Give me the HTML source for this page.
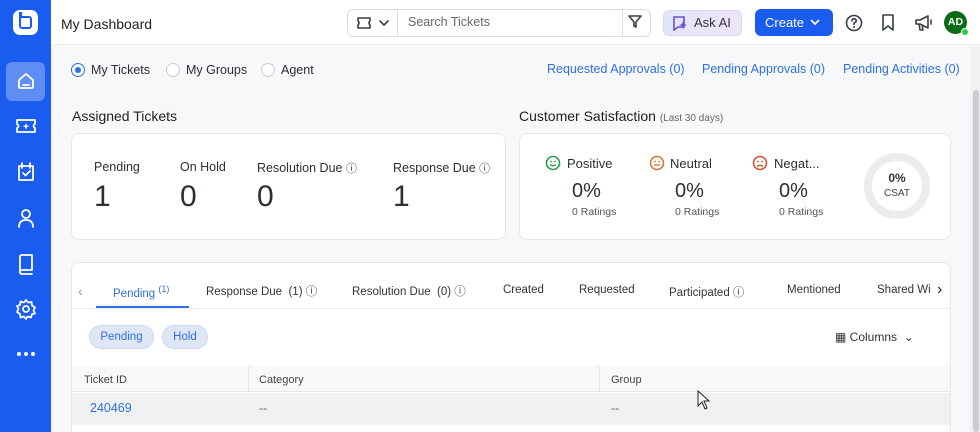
<!DOCTYPE html>
<html><head><meta charset="utf-8">
<style>
*{box-sizing:border-box;margin:0;padding:0}
html,body{width:980px;height:432px;overflow:hidden}
body{font-family:"Liberation Sans",sans-serif;background:#f7f8fa;position:relative;color:#2b2f36}
.a{position:absolute}
.side{left:0;top:0;width:51px;height:432px;background:#1a5cf0}
.hdr{left:0;top:0;width:980px;height:45px;background:#fff;border-bottom:1px solid #eceef2}
.card{background:#fff;border:1px solid #e6e8ec;border-radius:8px}
.blue{color:#2f6fe0}
svg{display:block}
.ic{stroke:#fff;fill:none;stroke-width:1.8;stroke-linecap:round;stroke-linejoin:round}
.g{stroke:#3a3f47;fill:none;stroke-width:1.6;stroke-linecap:round;stroke-linejoin:round}
</style></head><body>
<div class="a hdr">
  <div class="a" style="left:61px;top:16px;font-size:14px;color:#222">My Dashboard</div>
  <div class="a" style="left:347px;top:9px;width:304px;height:28px;border:1px solid #d9dce2;border-radius:6px;background:#fff"></div>
  <div class="a" style="left:397px;top:9px;width:1px;height:28px;background:#d9dce2"></div>
  <div class="a" style="left:622px;top:9px;width:1px;height:28px;background:#d9dce2"></div>
  <svg class="a" style="left:357px;top:16px" width="34" height="14"><path class="g" d="M1 2 H13 V5 Q11 7 13 9 V12 H1 V9 Q3 7 1 5Z M23 5 L27 9 L31 5"/></svg>
  <div class="a" style="left:408px;top:15px;font-size:12.5px;color:#666">Search Tickets</div>
  <svg class="a" style="left:627px;top:14px" width="16" height="16"><path class="g" d="M2 2 H14 L9 8 V13 L7 12 V8Z"/></svg>
  <div class="a" style="left:663px;top:10px;width:79px;height:26px;border-radius:6px;background:linear-gradient(90deg,#e2e6fb,#efe4fa);border:1px solid #d7d9f3"></div>
  <svg class="a" style="left:671px;top:15px" width="18" height="16"><path d="M3 2 H13 V12 H7 L3 15Z" stroke="#6a4fd8" stroke-width="1.6" fill="none"/><path d="M12 6 L13 9 L16 10 L13 11 L12 14 L11 11 L8 10 L11 9Z" fill="#6a4fd8"/></svg>
  <div class="a" style="left:694px;top:15px;font-size:13px;color:#333">Ask AI</div>
  <div class="a" style="left:755px;top:9px;width:78px;height:27px;border-radius:6px;background:#1a5cf0"></div>
  <div class="a" style="left:765px;top:15px;font-size:13px;color:#fff">Create</div>
  <svg class="a" style="left:809px;top:17px" width="12" height="10"><path d="M2 3 L6 7 L10 3" stroke="#fff" stroke-width="1.7" fill="none"/></svg>
  <svg class="a" style="left:845px;top:14px" width="18" height="18"><circle class="g" cx="9" cy="9" r="7.5"/><path class="g" d="M6.8 7 Q7 4.8 9 4.8 Q11.2 4.8 11.2 6.8 Q11.2 8.3 9 9 V10.5"/><circle cx="9" cy="13" r="1" fill="#3a3f47"/></svg>
  <svg class="a" style="left:880px;top:13px" width="16" height="19"><path class="g" d="M3 2 H13 V17 L8 13 L3 17Z"/></svg>
  <svg class="a" style="left:914px;top:13px" width="20" height="19"><path class="g" d="M2 7 H6 L14 3 V15 L6 11 H2Z M5 11 L6 17 H9 L8 12 M17 7 V11"/></svg>
  <div class="a" style="left:944px;top:11px;width:23px;height:23px;border-radius:50%;background:#0c6b16;color:#fff;font-size:10.5px;font-weight:bold;text-align:center;line-height:23px">AD</div>
  <div class="a" style="left:961px;top:28px;width:8px;height:8px;border-radius:50%;background:#2ecc40;border:1px solid #fff"></div>
</div>
<div class="a side">
  <div class="a" style="left:13px;top:10px;width:25px;height:25px;border-radius:7px;background:#fff"></div>
  <div class="a" style="left:19px;top:16px;width:13px;height:13px;border:2.5px solid #1a5cf0;border-radius:3px"></div>
  <div class="a" style="left:19px;top:12px;width:2.5px;height:6px;background:#1a5cf0"></div>
  <div class="a" style="left:6px;top:62px;width:39px;height:39px;border-radius:6px;background:#5e8ef3"></div>
  <svg class="a" style="left:16px;top:71px" width="20" height="20"><path class="ic" d="M3 9 L10 3 L17 9 V16 Q17 17 16 17 H4 Q3 17 3 16Z M7 14 H13"/></svg>
  <svg class="a" style="left:15px;top:117px" width="22" height="18"><path class="ic" d="M2 3 H20 V7 Q17 9 20 11 V15 H2 V11 Q5 9 2 7Z"/><path d="M11 6 L12 8.5 L14.5 9 L12 10 L11 12.5 L10 10 L7.5 9 L10 8.5Z" fill="#fff"/></svg>
  <svg class="a" style="left:16px;top:161px" width="20" height="22"><path class="ic" d="M3 5 H17 V19 H3Z M6 2 V7 M14 2 V7 M7 12 L9.5 14.5 L14 10"/></svg>
  <svg class="a" style="left:16px;top:207px" width="20" height="22"><circle class="ic" cx="10" cy="7" r="4"/><path class="ic" d="M3 20 Q3 13 10 13 Q17 13 17 20"/></svg>
  <svg class="a" style="left:16px;top:253px" width="20" height="22"><path class="ic" d="M4 4 Q4 2 6 2 H16 V17 H6 Q4 17 4 19 Z M4 19 Q4 21 6 21 H16"/></svg>
  <svg class="a" style="left:15px;top:298px" width="22" height="22"><circle class="ic" cx="11" cy="11" r="3"/><path class="ic" d="M11 2 L13 4.5 L16.5 4 L17 7.5 L20 9.5 L18.5 12.5 L20 15.5 L17 16 L16 19.5 L12.5 18.5 L11 21 L9 18.5 L5.5 19.5 L5 16 L2 14 L3.5 11 L2 8 L5 7 L5.5 3.5 L9 4.5Z"/></svg>
  <div class="a" style="left:17px;top:352px;width:4px;height:4px;border-radius:50%;background:#fff"></div>
  <div class="a" style="left:24px;top:352px;width:4px;height:4px;border-radius:50%;background:#fff"></div>
  <div class="a" style="left:31px;top:352px;width:4px;height:4px;border-radius:50%;background:#fff"></div>
</div>
<!-- scrollbar -->
<div class="a" style="left:970px;top:46px;width:10px;height:386px;background:#f0f1f3"></div>
<div class="a" style="left:973px;top:90px;width:6px;height:342px;background:#c9ccd2;border-radius:3px"></div>
<!-- radios -->
<div class="a" style="left:71px;top:63px;width:14px;height:14px;border:1.5px solid #2f6fe0;border-radius:50%"></div>
<div class="a" style="left:75px;top:67px;width:6px;height:6px;background:#2f6fe0;border-radius:50%"></div>
<div class="a" style="left:91px;top:63px;font-size:12.5px">My Tickets</div>
<div class="a" style="left:166px;top:63px;width:14px;height:14px;border:1px solid #c8ccd3;border-radius:50%;background:#fff"></div>
<div class="a" style="left:186px;top:63px;font-size:12.5px">My Groups</div>
<div class="a" style="left:261px;top:63px;width:14px;height:14px;border:1px solid #c8ccd3;border-radius:50%;background:#fff"></div>
<div class="a" style="left:281px;top:63px;font-size:12.5px">Agent</div>
<div class="a blue" style="left:547px;top:62px;font-size:12.5px">Requested Approvals (0)</div>
<div class="a blue" style="left:702px;top:62px;font-size:12.5px">Pending Approvals (0)</div>
<div class="a blue" style="left:843px;top:62px;font-size:12.5px">Pending Activities (0)</div>
<!-- assigned -->
<div class="a" style="left:72px;top:108px;font-size:14px;color:#222">Assigned Tickets</div>
<div class="a card" style="left:71px;top:133px;width:435px;height:107px"></div>
<div class="a" style="left:94px;top:160px;font-size:12.5px">Pending</div>
<div class="a" style="left:94px;top:180px;font-size:30px">1</div>
<div class="a" style="left:180px;top:160px;font-size:12.5px">On Hold</div>
<div class="a" style="left:180px;top:180px;font-size:30px">0</div>
<div class="a" style="left:257px;top:160px;font-size:12.5px">Resolution Due <span style="font-size:11px">ⓘ</span></div>
<div class="a" style="left:257px;top:180px;font-size:30px">0</div>
<div class="a" style="left:393px;top:160px;font-size:12.5px">Response Due <span style="font-size:11px">ⓘ</span></div>
<div class="a" style="left:393px;top:180px;font-size:30px">1</div>
<!-- csat -->
<div class="a" style="left:519px;top:108px;font-size:14px;color:#222">Customer Satisfaction <span style="font-size:10px;color:#666">(Last 30 days)</span></div>
<div class="a card" style="left:519px;top:133px;width:432px;height:107px"></div>
<svg class="a" style="left:545px;top:155px" width="16" height="16"><circle cx="8" cy="8" r="6.5" stroke="#2e9a4e" stroke-width="1.6" fill="none"/><path d="M5 9.5 Q8 12 11 9.5" stroke="#2e9a4e" stroke-width="1.4" fill="none"/><circle cx="6" cy="6.5" r="0.9" fill="#2e9a4e"/><circle cx="10" cy="6.5" r="0.9" fill="#2e9a4e"/></svg>
<div class="a" style="left:567px;top:156px;font-size:13px">Positive</div>
<div class="a" style="left:572px;top:180px;font-size:20px">0%</div>
<div class="a" style="left:572px;top:206px;font-size:10.5px;color:#555">0 Ratings</div>
<svg class="a" style="left:649px;top:155px" width="16" height="16"><circle cx="8" cy="8" r="6.5" stroke="#d07a35" stroke-width="1.6" fill="none"/><path d="M5 10 H11" stroke="#d07a35" stroke-width="1.4"/><circle cx="6" cy="6.5" r="0.9" fill="#d07a35"/><circle cx="10" cy="6.5" r="0.9" fill="#d07a35"/></svg>
<div class="a" style="left:670px;top:156px;font-size:13px">Neutral</div>
<div class="a" style="left:675px;top:180px;font-size:20px">0%</div>
<div class="a" style="left:675px;top:206px;font-size:10.5px;color:#555">0 Ratings</div>
<svg class="a" style="left:752px;top:155px" width="16" height="16"><circle cx="8" cy="8" r="6.5" stroke="#c6533a" stroke-width="1.6" fill="none"/><path d="M5 11.5 Q8 9 11 11.5" stroke="#c6533a" stroke-width="1.4" fill="none"/><circle cx="6" cy="6.5" r="0.9" fill="#c6533a"/><circle cx="10" cy="6.5" r="0.9" fill="#c6533a"/></svg>
<div class="a" style="left:774px;top:156px;font-size:13px">Negat...</div>
<div class="a" style="left:779px;top:180px;font-size:20px">0%</div>
<div class="a" style="left:779px;top:206px;font-size:10.5px;color:#555">0 Ratings</div>
<div class="a" style="left:864px;top:153px;width:66px;height:66px;border:8px solid #ebecee;border-radius:50%"></div>
<div class="a" style="left:864px;top:171px;width:66px;text-align:center;font-size:12px;font-weight:bold">0%</div>
<div class="a" style="left:864px;top:188px;width:66px;text-align:center;font-size:10px;color:#444">CSAT</div>
<!-- tabs card -->
<div class="a card" style="left:71px;top:262px;width:880px;height:180px;border-radius:8px 8px 0 0"></div>
<div class="a" style="left:72px;top:308px;width:878px;height:1px;background:#eceef2"></div>
<div class="a" style="left:78px;top:283px;font-size:14px;color:#999">‹</div>
<div class="a blue" style="left:113px;top:284px;font-size:11.5px">Pending <sup style="font-size:9px">(1)</sup></div>
<div class="a" style="left:96px;top:306px;width:93px;height:2px;background:#2f6fe0"></div>
<div class="a" style="left:206px;top:283px;font-size:11.5px;color:#333">Response Due &nbsp;(1) ⓘ</div>
<div class="a" style="left:352px;top:283px;font-size:11.5px;color:#333">Resolution Due &nbsp;(0) ⓘ</div>
<div class="a" style="left:503px;top:284px;font-size:11.5px;color:#333">Created</div>
<div class="a" style="left:579px;top:284px;font-size:11.5px;color:#333">Requested</div>
<div class="a" style="left:669px;top:284px;font-size:11.5px;color:#333">Participated ⓘ</div>
<div class="a" style="left:787px;top:284px;font-size:11.5px;color:#333">Mentioned</div>
<div class="a" style="left:877px;top:284px;font-size:11.5px;color:#333;width:53px;overflow:hidden;white-space:nowrap">Shared With</div>
<div class="a" style="left:937px;top:281px;font-size:16px;color:#222">›</div>
<div class="a" style="left:89px;top:325px;width:65px;height:24px;border-radius:12px;background:#dfe7f7;border:1px solid #cdd7ee;color:#2f6fe0;font-size:11.5px;text-align:center;line-height:22px">Pending</div>
<div class="a" style="left:162px;top:325px;width:46px;height:24px;border-radius:12px;background:#dfe7f7;border:1px solid #cdd7ee;color:#2f6fe0;font-size:11.5px;text-align:center;line-height:22px">Hold</div>
<div class="a" style="left:835px;top:330px;font-size:12px;color:#333">▦ Columns &nbsp;⌄</div>
<div class="a" style="left:72px;top:366px;width:878px;height:26px;background:#f7f8fa;border-bottom:1px solid #e3e5e9"></div>
<div class="a" style="left:248px;top:366px;width:1px;height:26px;background:#e3e5e9"></div>
<div class="a" style="left:599px;top:366px;width:1px;height:26px;background:#e3e5e9"></div>
<div class="a" style="left:84px;top:374px;font-size:11px;color:#444">Ticket ID</div>
<div class="a" style="left:259px;top:374px;font-size:11px;color:#444">Category</div>
<div class="a" style="left:611px;top:374px;font-size:11px;color:#444">Group</div>
<div class="a" style="left:72px;top:393px;width:878px;height:32px;background:#f0f1f3"></div>
<div class="a blue" style="left:90px;top:401px;font-size:12.5px">240469</div>
<div class="a" style="left:259px;top:401px;font-size:12px;color:#555">--</div>
<div class="a" style="left:611px;top:401px;font-size:12px;color:#555">--</div>
<svg class="a" style="left:697px;top:390px" width="16" height="22"><path d="M1 1 V16 L5 12 L8 19 L10 18 L7 11 H12Z" fill="#fff" stroke="#222" stroke-width="1"/></svg>
</body></html>
